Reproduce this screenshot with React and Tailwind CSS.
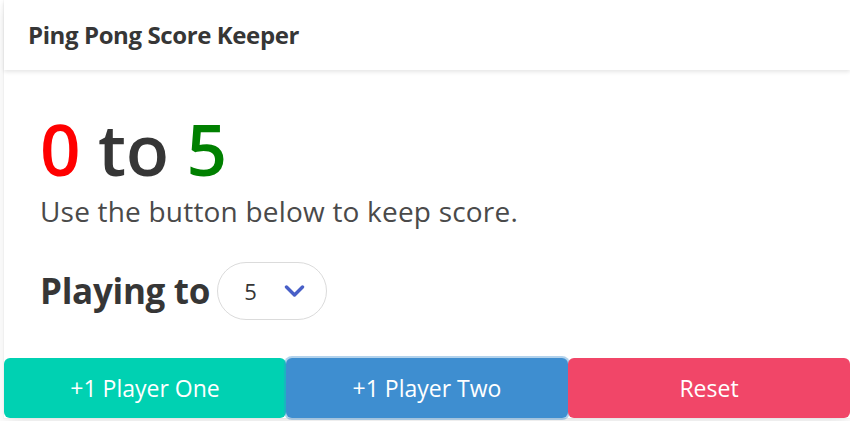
export default function App() {
  const font = { fontFamily: '"Open Sans", "Noto Sans", sans-serif' };
  return (
    <div className="min-h-[421px] bg-white pl-[4px]" style={font}>
      <div className="bg-white shadow-[0_0.5em_1em_-0.125em_rgba(10,10,10,0.1),0_0_0_1px_rgba(10,10,10,0.02)] text-[#4a4a4a]">
        <header className="h-[70px] flex items-center px-[24px] shadow-[0_0.125em_0.25em_rgba(10,10,10,0.1)]">
          <p className="text-[24px] font-bold text-[#363636] tracking-[-0.4px]">Ping Pong Score Keeper</p>
        </header>
        <div className="px-[36px] pt-[39px] pb-[38px]">
          <h1 className="text-[71px] leading-[80px] font-semibold text-[#363636] tracking-[-0.5px]">
            <span className="text-[#ff0000]">0</span> to <span className="text-[#008000]">5</span>
          </h1>
          <p className="text-[28px] leading-[36px] text-[#4a4a4a] mt-[4px] tracking-[0.2px]">Use the button below to keep score.</p>
          <div className="mt-[33px] flex items-center h-[58px]">
            <span className="text-[35px] leading-[58px] font-bold text-[#363636] tracking-[-0.3px]">Playing to</span>
            <div className="ml-[7px] w-[110px] h-[58px] rounded-full border border-[#dbdbdb] flex items-center pl-[26px]">
              <span className="text-[22px] text-[#363636]">5</span>
              <svg className="ml-[27px]" width="21" height="12" viewBox="0 0 21 12">
                <path d="M2.5 2 L10.5 10 L18.5 2" fill="none" stroke="#485fc7" strokeWidth="3.4" strokeLinecap="round" strokeLinejoin="round" />
              </svg>
            </div>
          </div>
        </div>
        <div className="flex h-[60px]">
          <button className="flex-1 bg-[#00d1b2] text-white text-[23px] rounded-[6px]">+1 Player One</button>
          <button className="flex-1 bg-[#3e8ed0] text-white text-[23px] rounded-[6px] ring-2 ring-[#3e8ed0]/40">+1 Player Two</button>
          <button className="flex-1 bg-[#f14668] text-white text-[23px] rounded-[6px]">Reset</button>
        </div>
      </div>
    </div>
  );
}
